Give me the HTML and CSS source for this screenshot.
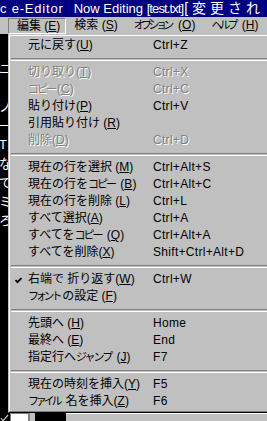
FILE: index.html
```html
<!DOCTYPE html>
<html>
<head>
<meta charset="utf-8">
<link rel="stylesheet" href="styles.css">
</head>
<body>
<div class="screen">
  <div class="titlebar"><span class="app">c e-Editor</span><span class="doc">Now Editing</span> <span class="file">[test.txt]</span><span class="chg">[変更され</span></div>
  <div class="menubar">
    <div class="mb-item active">編集 (<u>E</u>)</div>
    <div class="mb-item">検索 (<u>S</u>)</div>
    <div class="mb-item"><span class="k-opt">オプション</span> (<u>O</u>)</div>
    <div class="mb-item"><span class="k-help">ヘルプ</span> (<u>H</u>)</div>
  </div>
  <div class="workspace">
    <div class="editor">
      <div class="line">ニ</div>
      <div class="line"></div>
      <div class="line">ノ</div>
      <div class="line">一</div>
      <div class="line">T</div>
      <div class="line">な</div>
      <div class="line">で</div>
      <div class="line">ミ</div>
      <div class="line">ろ</div>
    </div>
    <div class="dropdown">
      <div class="dd-inner">
        <div class="item"><span class="gutter"></span><span class="label">元に戻す(<u>U</u>)</span><span class="key">Ctrl+Z</span></div>
        <div class="sep"></div>
        <div class="item dis"><span class="gutter"></span><span class="label">切り取り(<u>T</u>)</span><span class="key">Ctrl+X</span></div>
        <div class="item dis"><span class="gutter"></span><span class="label"><span class="k9">コピー</span>(<u>C</u>)</span><span class="key">Ctrl+C</span></div>
        <div class="item"><span class="gutter"></span><span class="label">貼り付け(<u>P</u>)</span><span class="key">Ctrl+V</span></div>
        <div class="item"><span class="gutter"></span><span class="label">引用貼り付け (<u>R</u>)</span><span class="key"></span></div>
        <div class="item dis"><span class="gutter"></span><span class="label">削除(<u>D</u>)</span><span class="key">Ctrl+D</span></div>
        <div class="sep"></div>
        <div class="item"><span class="gutter"></span><span class="label">現在の行を選択 (<u>M</u>)</span><span class="key">Ctrl+Alt+S</span></div>
        <div class="item"><span class="gutter"></span><span class="label">現在の行を<span class="k9">コピー</span> (<u>B</u>)</span><span class="key">Ctrl+Alt+C</span></div>
        <div class="item"><span class="gutter"></span><span class="label">現在の行を削除 (<u>L</u>)</span><span class="key">Ctrl+L</span></div>
        <div class="item"><span class="gutter"></span><span class="label">すべて選択(<u>A</u>)</span><span class="key">Ctrl+A</span></div>
        <div class="item"><span class="gutter"></span><span class="label">すべてを<span class="k9">コピー</span> (<u>Q</u>)</span><span class="key">Ctrl+Alt+A</span></div>
        <div class="item"><span class="gutter"></span><span class="label">すべてを削除(<u>X</u>)</span><span class="key">Shift+Ctrl+Alt+D</span></div>
        <div class="sep"></div>
        <div class="item"><span class="gutter"><svg class="check" width="7" height="7" viewBox="0 0 7 7"><polyline points="0.5,3 2.5,5.2 6.5,1" fill="none" stroke="#000" stroke-width="1.8"/></svg></span><span class="label">右端で 折り返す(<u>W</u>)</span><span class="key">Ctrl+W</span></div>
        <div class="item"><span class="gutter"></span><span class="label"><span class="k7">フォント</span>の設定 (<u>F</u>)</span><span class="key"></span></div>
        <div class="sep"></div>
        <div class="item"><span class="gutter"></span><span class="label">先頭へ (<u>H</u>)</span><span class="key">Home</span></div>
        <div class="item"><span class="gutter"></span><span class="label">最終へ (<u>E</u>)</span><span class="key">End</span></div>
        <div class="item"><span class="gutter"></span><span class="label">指定行へ<span class="k9">ジャンプ</span> (<u>J</u>)</span><span class="key">F7</span></div>
        <div class="sep"></div>
        <div class="item"><span class="gutter"></span><span class="label">現在の時刻を挿入(<u>Y</u>)</span><span class="key">F5</span></div>
        <div class="item"><span class="gutter"></span><span class="label"><span class="k7">ファイル</span> 名を挿入(<u>Z</u>)</span><span class="key">F6</span></div>
      </div>
    </div>
  </div>
  <div class="bottom">
    <div class="b-icon"><svg width="10" height="9" viewBox="0 0 10 9"><polyline points="1,4 3,7 8,1" fill="none" stroke="#c0c0c0" stroke-width="1.2"/></svg></div>
    <div class="b-white"></div>
    <div class="b-gray"></div>
    <div class="b-black"></div>
    <div class="b-rest"></div>
  </div>
</div>
</body>
</html>
```

FILE: styles.css
```css
body {
  margin: 0;
  background: #000;
  font-family: "Liberation Sans", "Noto Sans CJK JP", sans-serif;
  font-size: 12px;
}

.screen {
  width: 267px;
  height: 421px;
  overflow: hidden;
  display: flex;
  flex-direction: column;
}

.titlebar {
  flex: none;
  height: 17px;
  background: #000080;
  color: #fff;
  font-size: 13px;
  line-height: 17px;
  white-space: nowrap;
  overflow: hidden;
}

.app {
  letter-spacing: 0.8px;
}

.doc {
  margin-left: 10px;
}

.file {
  letter-spacing: -0.9px;
}

.chg {
  margin-left: 1px;
  font-size: 14px;
  letter-spacing: 4px;
}

.menubar {
  flex: none;
  height: 17px;
  background: #c0c0c0;
  display: flex;
  color: #000;
  white-space: nowrap;
}

.mb-item {
  height: 17px;
  line-height: 17px;
  padding: 0 8px;
  box-sizing: border-box;
}

.mb-item.active {
  margin-left: 8px;
  margin-top: 1px;
  height: 16px;
  line-height: 14px;
  padding: 0 5px 0 8px;
  border: 1px solid;
  border-color: #808080 #fff #fff #808080;
}

.k-opt {
  font-size: 11px;
  letter-spacing: -3.6px;
  margin-right: 4px;
}

.k-help {
  font-size: 11px;
  letter-spacing: -3px;
  margin-right: 3px;
}

.k9 {
  font-size: 11px;
  letter-spacing: -2px;
  margin-right: 2px;
}

.k7 {
  font-size: 11px;
  letter-spacing: -3.2px;
  margin-right: 3px;
}

.workspace {
  flex: none;
  height: 377px;
  position: relative;
  background: #000;
}

.editor {
  padding-top: 25px;
  color: #fff;
  font-size: 13px;
}

.line {
  height: 19px;
  line-height: 19px;
  text-indent: -1px;
  white-space: nowrap;
}

.dropdown {
  position: absolute;
  top: 0;
  left: 8px;
  width: 262px;
  background: #c0c0c0;
  border-top: 1px solid #c0c0c0;
  border-left: 1px solid #c0c0c0;
  border-bottom: 1px solid #000;
}

.dd-inner {
  border-top: 1px solid #fff;
  border-left: 1px solid #fff;
  border-bottom: 1px solid #808080;
  padding: 1px 0;
}

.item {
  height: 17px;
  line-height: 17px;
  display: flex;
  align-items: center;
  color: #000;
  white-space: nowrap;
}

.item.dis {
  color: #808080;
  text-shadow: 1px 1px 0 #fff;
}

.gutter {
  width: 18px;
  flex: none;
  display: flex;
  align-items: center;
}

.check {
  margin-left: 5px;
  margin-top: 1px;
}

.label {
  width: 125px;
  flex: none;
}

.key {
  letter-spacing: 0.3px;
}

.sep {
  height: 1px;
  margin: 4px 1px 3px 1px;
  border-top: 1px solid #808080;
  border-bottom: 1px solid #fff;
}

.bottom {
  flex: none;
  height: 10px;
  display: flex;
  background: #c0c0c0;
}

.b-icon {
  width: 10px;
  background: #000;
  padding-top: 1px;
}

.b-white {
  width: 17px;
  margin-top: 2px;
  background: #fff;
  border: 1px solid #808080;
  border-bottom: none;
}

.b-gray {
  width: 5px;
  border-left: 1px solid #808080;
  border-top: 2px solid #000;
}

.b-black {
  width: 31px;
  background: #000;
}

.b-rest {
  flex: 1;
  border-top: 2px solid #000;
  box-shadow: inset 0 1px 0 #fff;
}
```
